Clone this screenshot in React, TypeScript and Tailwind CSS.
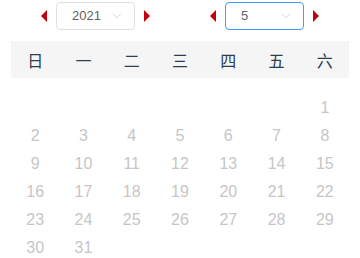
import { ChevronDown } from "lucide-react";

const WEEK = ["日", "一", "二", "三", "四", "五", "六"];

function Arrow({ dir }: { dir: "left" | "right" }) {
  return dir === "left" ? (
    <span className="block w-0 h-0 border-y-[6px] border-y-transparent border-r-[6px] border-r-[#c4000a]" />
  ) : (
    <span className="block w-0 h-0 border-y-[6px] border-y-transparent border-l-[6px] border-l-[#c4000a]" />
  );
}

function Picker({ value, active }: { value: string; active?: boolean }) {
  return (
    <div className="flex items-center gap-[9px]">
      <Arrow dir="left" />
      <div
        className={
          active
            ? "flex items-center justify-between w-[79px] h-[28px] pl-[15px] pr-[10px] rounded-[4px] border border-[#409eff] bg-white"
            : "flex items-center justify-between w-[79px] h-[28px] pl-[15px] pr-[10px] rounded-[4px] border border-[#dcdfe6] bg-white"
        }
      >
        <span className="text-[13px] text-[#606266]">{value}</span>
        <ChevronDown size={14} strokeWidth={1.25} className="text-[#c0c4cc]" />
      </div>
      <Arrow dir="right" />
    </div>
  );
}

export default function App() {
  const cells: (number | null)[] = [
    ...Array(6).fill(null),
    ...Array.from({ length: 31 }, (_, i) => i + 1),
  ];

  return (
    <div
      className="w-[360px] h-[258px] bg-white overflow-hidden"
      style={{ fontFamily: '"Liberation Sans", "Noto Sans CJK SC", sans-serif' }}
    >
      <div className="px-[11px] pt-[2px] flex justify-around items-center">
        <Picker value="2021" />
        <Picker value="5" active />
      </div>

      <div className="mx-[11px] mt-[11px]">
        <div className="grid grid-cols-7 h-[37px] bg-[#f5f5f5] items-center">
          {WEEK.map((w) => (
            <div
              key={w}
              className="text-center text-[16px] text-[#2c3e50]"
              style={{ fontFamily: '"Noto Sans CJK SC", sans-serif' }}
            >
              {w}
            </div>
          ))}
        </div>
        <div className="grid grid-cols-7 pt-4">
          {cells.map((d, i) => (
            <div key={i} className="h-[28px] flex items-center justify-center text-[16px] text-[#c6c6c6]">
              {d ?? ""}
            </div>
          ))}
        </div>
      </div>
    </div>
  );
}
